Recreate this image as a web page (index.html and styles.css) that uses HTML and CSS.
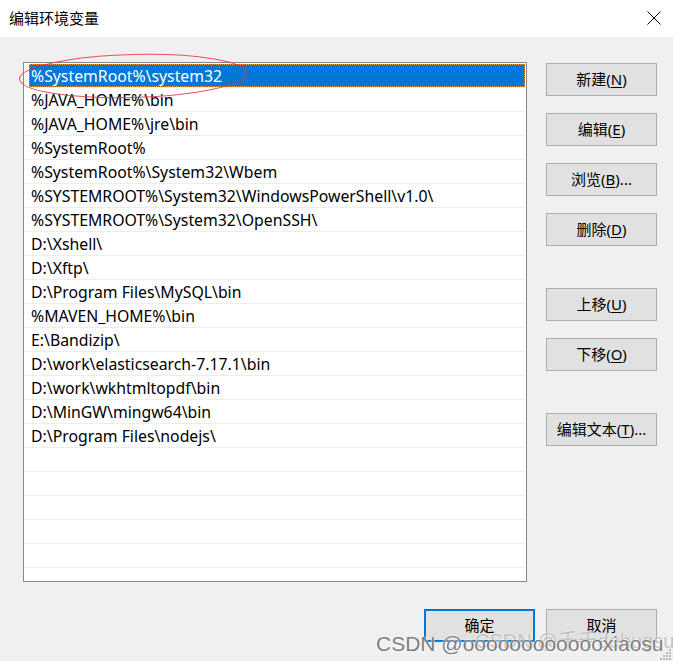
FILE: index.html
```html
<!DOCTYPE html>
<html lang="zh-CN">
<head>
    <meta charset="UTF-8">
    <title>编辑环境变量</title>
    <link rel="stylesheet" href="styles.css">
</head>
<body>
    <div class="dialog">
        <div class="titlebar">
            <span class="title">编辑环境变量</span>
            <svg class="close" width="14" height="14" viewBox="0 0 14 14">
                <path d="M0.5 0.5 L13.5 13.5 M13.5 0.5 L0.5 13.5" stroke="#000" stroke-width="1" fill="none"/>
            </svg>
        </div>

        <div class="content">
            <div class="path-list">
                <ul class="rows">
                    <li class="row selected"><span class="cell">%SystemRoot%\system32</span></li>
                    <li class="row"><span class="cell">%JAVA_HOME%\bin</span></li>
                    <li class="row"><span class="cell">%JAVA_HOME%\jre\bin</span></li>
                    <li class="row"><span class="cell">%SystemRoot%</span></li>
                    <li class="row"><span class="cell">%SystemRoot%\System32\Wbem</span></li>
                    <li class="row"><span class="cell">%SYSTEMROOT%\System32\WindowsPowerShell\v1.0\</span></li>
                    <li class="row"><span class="cell">%SYSTEMROOT%\System32\OpenSSH\</span></li>
                    <li class="row"><span class="cell">D:\Xshell\</span></li>
                    <li class="row"><span class="cell">D:\Xftp\</span></li>
                    <li class="row"><span class="cell">D:\Program Files\MySQL\bin</span></li>
                    <li class="row"><span class="cell">%MAVEN_HOME%\bin</span></li>
                    <li class="row"><span class="cell">E:\Bandizip\</span></li>
                    <li class="row"><span class="cell">D:\work\elasticsearch-7.17.1\bin</span></li>
                    <li class="row"><span class="cell">D:\work\wkhtmltopdf\bin</span></li>
                    <li class="row"><span class="cell">D:\MinGW\mingw64\bin</span></li>
                    <li class="row"><span class="cell">D:\Program Files\nodejs\</span></li>
                    <li class="row"><span class="cell"></span></li>
                    <li class="row"><span class="cell"></span></li>
                    <li class="row"><span class="cell"></span></li>
                    <li class="row"><span class="cell"></span></li>
                    <li class="row"><span class="cell"></span></li>
                    <li class="row"><span class="cell"></span></li>
                </ul>
                <!-- hand-drawn circle around the first entry -->
                <svg class="mark" width="240" height="50" viewBox="0 0 240 50">
                    <ellipse cx="115" cy="23" rx="113.5" ry="21.5" transform="rotate(-1.5 115 23)" fill="none" stroke="#e8363f" stroke-opacity="0.85" stroke-width="1"/>
                </svg>
            </div>

            <div class="actions">
                <button class="btn">新建(<u>N</u>)</button>
                <button class="btn">编辑(<u>E</u>)</button>
                <button class="btn">浏览(<u>B</u>)...</button>
                <button class="btn">删除(<u>D</u>)</button>
                <button class="btn spaced">上移(<u>U</u>)</button>
                <button class="btn">下移(<u>O</u>)</button>
                <button class="btn spaced">编辑文本(<u>T</u>)...</button>
            </div>
        </div>

        <div class="footer">
            <button class="btn default">确定</button>
            <button class="btn">取消</button>
        </div>

        <div class="watermark">
            <span class="wm-back">CSDN @千千dehugsu</span>
            <span class="wm-front">CSDN @ooooooooooooxiaosu</span>
        </div>

        <svg class="grip" width="12" height="12" viewBox="0 0 12 12">
            <g fill="#b9b9b9">
                <rect x="9" y="1" width="2" height="2"/>
                <rect x="6" y="4" width="2" height="2"/>
                <rect x="9" y="4" width="2" height="2"/>
                <rect x="3" y="7" width="2" height="2"/>
                <rect x="6" y="7" width="2" height="2"/>
                <rect x="9" y="7" width="2" height="2"/>
                <rect x="0" y="10" width="2" height="2"/>
                <rect x="3" y="10" width="2" height="2"/>
                <rect x="6" y="10" width="2" height="2"/>
                <rect x="9" y="10" width="2" height="2"/>
            </g>
        </svg>
    </div>
</body>
</html>
```

FILE: styles.css
```css
body {
    margin: 0;
    background: #f0f0f0;
    font-family: 'Noto Sans', 'Noto Sans CJK SC', sans-serif;
    font-size: 15px;
    color: #000;
}
.dialog {
    position: relative;
    width: 673px;
    height: 661px;
    overflow: hidden;
}
.titlebar {
    height: 37px;
    background: #fff;
    display: flex;
    align-items: center;
    justify-content: space-between;
    padding: 0 12px 2px 9px;
    box-sizing: border-box;
}
.title {
    font-family: 'Noto Sans CJK SC', sans-serif;
    font-size: 15px;
}
.close {
    display: block;
}
.content {
    display: flex;
    gap: 19px;
    padding: 25px 16px 0 23px;
}
.path-list {
    position: relative;
    width: 504px;
    height: 520px;
    box-sizing: border-box;
    border: 1px solid #828790;
    background: #fff;
}
.rows {
    list-style: none;
    margin: 0;
    padding: 1px 1px 0 0;
    height: 518px;
    box-sizing: border-box;
    overflow: hidden;
}
.row {
    height: 23px;
    border-bottom: 1px solid #ededed;
    display: flex;
}
.cell {
    flex: 1;
    box-sizing: border-box;
    margin-left: 5px;
    padding: 2px 0 0 2px;
    line-height: 21px;
    font-size: 15.8px;
    white-space: nowrap;
}
.row.selected .cell {
    background: #0078d7;
    color: #fff;
    outline: 1px dotted #f09a3c;
    outline-offset: -1px;
}
.mark {
    position: absolute;
    left: -6px;
    top: -10px;
}
.actions {
    display: flex;
    flex-direction: column;
    gap: 17px;
    padding-top: 1px;
}
.btn {
    width: 111px;
    height: 33px;
    box-sizing: border-box;
    border: 1px solid #adadad;
    background: #e1e1e1;
    font-family: 'Noto Sans', 'Noto Sans CJK SC', sans-serif;
    font-size: 15px;
    color: #000;
    padding: 0 0 3px;
    cursor: pointer;
}
.btn u {
    text-underline-offset: 2px;
}
.btn.spaced {
    margin-top: 25px;
}
.btn.default {
    border: 2px solid #0078d7;
}
.footer {
    display: flex;
    justify-content: flex-end;
    gap: 11px;
    padding: 27px 16px 0 0;
}
.watermark {
    position: absolute;
    left: 376px;
    top: 629px;
    font-family: 'Liberation Sans', sans-serif;
    font-size: 21px;
    white-space: nowrap;
}
.wm-front {
    position: absolute;
    left: 0;
    top: 3px;
    color: rgba(100, 100, 100, 0.85);
    text-shadow: 0 0 2px #fff, 0 0 1px #fff;
}
.wm-back {
    position: absolute;
    left: 99px;
    top: -4px;
    font-size: 20px;
    color: rgba(140, 140, 140, 0.5);
    text-shadow: 0 0 2px #fff;
}
.grip {
    position: absolute;
    right: 1px;
    bottom: 1px;
}
```
